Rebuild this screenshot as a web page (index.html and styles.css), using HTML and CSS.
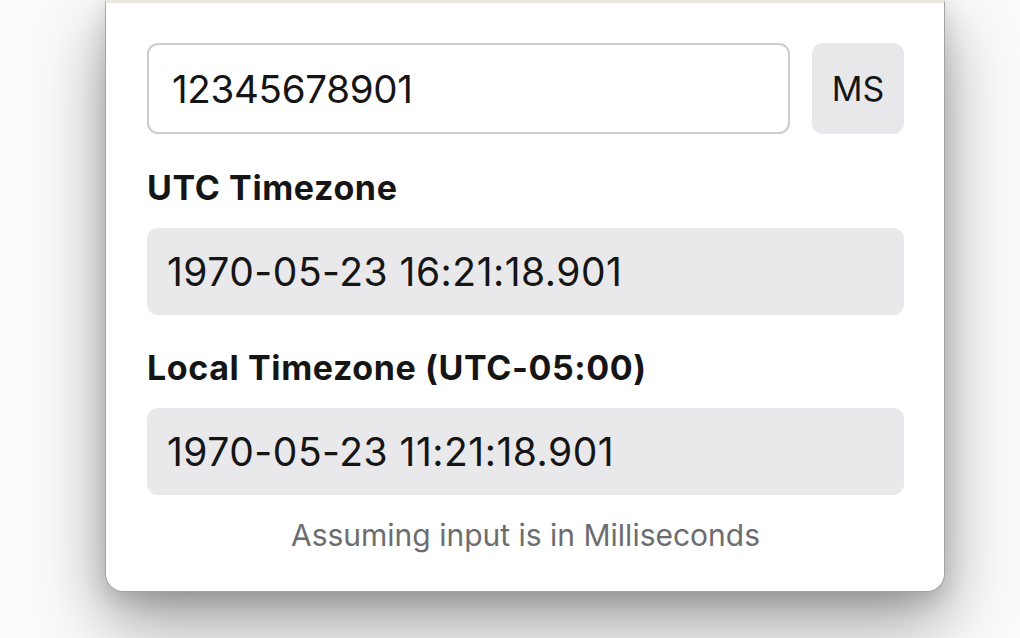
FILE: index.html
```html
<!DOCTYPE html>
<html>
<head>
<meta charset="utf-8">
<link rel="stylesheet" href="styles.css">
</head>
<body>
<div class="panel">
  <div class="input-row">
    <div class="ts-input">12345678901</div>
    <div class="unit-btn">MS</div>
  </div>
  <div class="label first">UTC Timezone</div>
  <div class="output">1970-05-23 16:21:18.901</div>
  <div class="label">Local Timezone (UTC-05:00)</div>
  <div class="output">1970-05-23 11:21:18.901</div>
  <div class="note">Assuming input is in Milliseconds</div>
</div>
</body>
</html>
```
FILE: styles.css
```css
html, body {
  margin: 0;
  padding: 0;
}
body {
  width: 1020px;
  height: 638px;
  overflow: hidden;
  background: #fbfbfb;
  font-family: "Inter", "Liberation Sans", sans-serif;
  color: #151515;
}
.panel {
  margin-left: 105px;
  width: 840px;
  box-sizing: border-box;
  height: 592px;
  background: #fff;
  border: 1px solid #a4a4a4;
  border-top: 3px solid #ebe8e2;
  border-radius: 0 0 18px 18px;
  box-shadow: 0 30px 70px rgba(0, 0, 0, 0.38), 0 8px 24px rgba(0, 0, 0, 0.14);
  padding: 40px 40px 0 41px;
  display: flex;
  flex-direction: column;
}
.input-row {
  display: flex;
  gap: 22px;
  height: 91px;
}
.ts-input {
  flex: 1;
  box-sizing: border-box;
  border: 2px solid #cccccc;
  border-radius: 11px;
  display: flex;
  align-items: center;
  padding-left: 23px;
  font-size: 38.5px;
  letter-spacing: -0.3px;
}
.unit-btn {
  width: 92px;
  background: #e8e8ea;
  border-radius: 11px;
  display: flex;
  align-items: center;
  justify-content: center;
  font-size: 34px;
}
.label {
  font-weight: 700;
  font-size: 34px;
  line-height: 40px;
  letter-spacing: 0.6px;
  margin-top: 33px;
  margin-bottom: 20px;
}
.label.first {
  margin-top: 34px;
}
.output {
  height: 87px;
  background: #e9e9eb;
  border-radius: 11px;
  display: flex;
  align-items: center;
  padding-left: 20px;
  font-size: 39px;
  letter-spacing: 0.5px;
}
.note {
  margin-top: 22px;
  text-align: center;
  font-size: 30px;
  line-height: 36px;
  color: #6d6d70;
}
```
